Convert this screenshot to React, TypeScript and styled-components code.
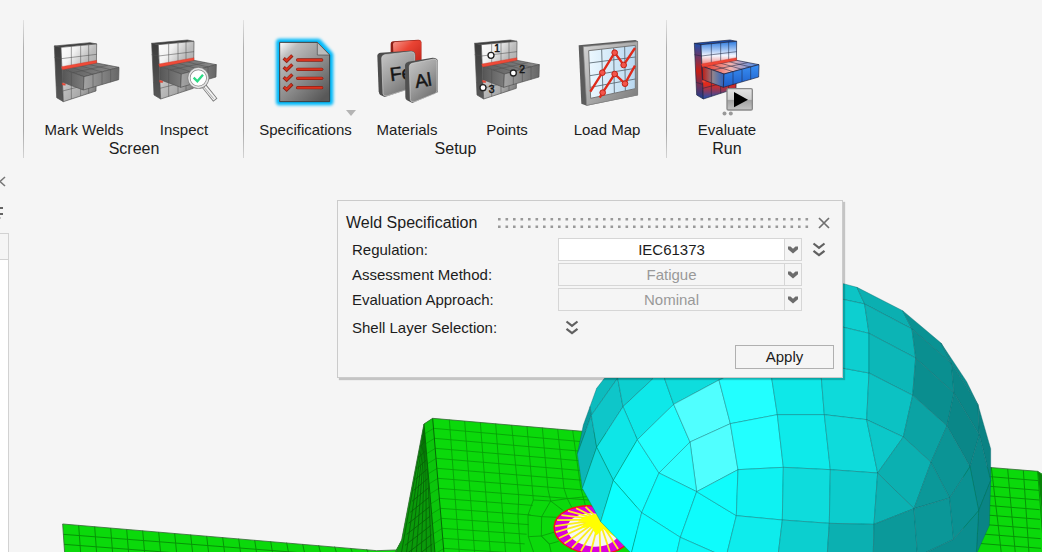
import React from "react";
import styled, { createGlobalStyle } from "styled-components";

const Global = createGlobalStyle`
  *, *::before, *::after { box-sizing: border-box; }
  body {
    margin: 0;
    background: #f5f5f5;
    color: #1c1c1c;
    font: 15px/18px "Liberation Sans", Arial, sans-serif;
  }
  button, select { font: inherit; color: inherit; }
`;

const Page = styled.div`
  min-height: 100vh;
  display: flex;
  flex-direction: column;
  overflow: hidden;
`;

/* ---------- ribbon ---------- */

const Ribbon = styled.header`
  display: flex;
  height: 160px;
  flex: none;
  padding: 20px 0 0 23px;
`;

const Group = styled.section`
  position: relative;
  display: flex;
  flex-direction: column;
  align-items: center;
  padding: 16px 9px 0 11px;
  &::before {
    content: "";
    position: absolute;
    left: 0;
    top: 0;
    width: 1px;
    height: 138px;
    background: linear-gradient(#e2e2e2, #b0b0b0 20%, #a8a8a8 80%, #d4d4d4);
  }
`;

const Tools = styled.div`
  display: flex;
`;

const Tool = styled.button<{ $wide?: boolean }>`
  position: relative;
  display: flex;
  flex-direction: column;
  align-items: center;
  gap: 13px;
  width: ${(p) => (p.$wide ? 103 : 100)}px;
  padding: 0;
  border: 0;
  background: none;
  white-space: nowrap;
`;

const ToolIcon = styled.svg`
  width: 72px;
  height: 72px;
  overflow: visible;
`;

const MenuMark = styled.svg`
  position: absolute;
  top: 74px;
  right: 1px;
  width: 10px;
  height: 6px;
`;

const MoreMark = styled.svg`
  position: absolute;
  top: 75px;
  left: 45px;
  width: 12px;
  height: 5px;
`;

const GroupTitle = styled.h2`
  margin: 0;
  font-size: 16px;
  font-weight: 400;
  line-height: 20px;
`;

const GREY = {
  side: ["#3c3c3c", "#585858"],
  face: ["#ffffff", "#a8a8a8", "#8a8a8a", "#b4b4b4"],
  top: ["#5a5a5a", "#747474", "#8a8a8a"],
  front: ["#a4a4a4", "#666666"],
  flank: ["#565656", "#7c7c7c"],
  line: "#505050",
  weld: "#ef4a38",
};
const HEAT = {
  side: ["#1d4fae", "#c81e14", "#1b3f92"],
  face: ["#2d7be0", "#f4f6ff", "#f03a28", "#e02a1c", "#1c50b4"],
  top: ["#e42a1c", "#f3b3ae", "#3c86ea"],
  front: ["#3a90f4", "#1c5cc8"],
  flank: ["#c01c14", "#8c8490", "#2a62c0"],
  line: "#1c2340",
  weld: "#f04636",
};

function Grad({ id, stops, vertical }: { id: string; stops: string[]; vertical?: boolean }) {
  return (
    <linearGradient id={id} x1="0" y1="0" x2={vertical ? 0 : 1} y2={vertical ? 1 : 0}>
      {stops.map((c, i) => (
        <stop key={i} offset={i / (stops.length - 1)} stopColor={c} />
      ))}
    </linearGradient>
  );
}

function Beam({ id, tone = GREY, heat }: { id: string; tone?: typeof GREY; heat?: boolean }) {
  const u = (n: string) => `url(#${id}-${n})`;
  return (
    <g stroke={tone.line} strokeWidth="2" strokeLinejoin="round">
      <defs>
        <Grad id={`${id}-side`} stops={tone.side} vertical />
        {heat ? (
          <Grad id={`${id}-face`} stops={tone.face} vertical />
        ) : (
          <linearGradient id={`${id}-face`} x1="0" y1="0" x2=".9" y2="1">
            <stop offset="0" stopColor="#fff" />
            <stop offset=".25" stopColor="#f2f2f2" />
            <stop offset=".5" stopColor="#bdbdbd" />
            <stop offset=".75" stopColor="#a8a8a8" />
            <stop offset="1" stopColor="#6c6c6c" />
          </linearGradient>
        )}
        <Grad id={`${id}-top`} stops={tone.top} />
        <Grad id={`${id}-front`} stops={tone.front} vertical={heat} />
        <Grad id={`${id}-flank`} stops={tone.flank} />
      </defs>
      <path d="M163 93L270 83L290 87L183 97Z" fill={tone.side[0]} />
      <path d="M163 93L183 97L190 260L170 248Z" fill={u("side")} />
      <path d="M183 97L290 87L288 228L190 260Z" fill={u("face")} />
      <path
        d="M163 127L184 131L290 118M168 210L188 216M188 228L250 212M214 94V252M242 92V243M266 89V235"
        fill="none"
        strokeWidth="1.6"
      />
      <path d="M187 162L290 144L357 157L252 185Z" fill={u("top")} />
      <path d="M187 162L252 185L250 225L188 202Z" fill={u("flank")} />
      <path d="M252 185L357 157L356 194L250 225Z" fill={u("front")} />
      <path
        d="M218 173L323 151M214 157L279 178V217M240 152L306 171V209M266 148L332 164V202M214 172V211"
        fill="none"
        strokeWidth="1.6"
      />
      <path d="M184 155L290 136V144L187 164Z" fill={tone.weld} stroke="#c23a2a" strokeWidth="1" />
      <path d="M186 204L196 206V211L187 210Z" fill={tone.weld} stroke="#c23a2a" strokeWidth="1" />
    </g>
  );
}

const MarkIcon = () => (
  <ToolIcon viewBox="144 63 216 216" aria-hidden="true">
    <Beam id="mark" />
  </ToolIcon>
);

const InspectIcon = () => (
  <ToolIcon viewBox="444 63 216 216" aria-hidden="true">
    <g transform="translate(292 -8)">
      <Beam id="inspect" />
    </g>
    <path d="M612 213L641 249" stroke="#777" strokeWidth="16" strokeLinecap="square" />
    <path d="M610 211L641 249" stroke="#f2f2f2" strokeWidth="11" strokeLinecap="square" />
    <path d="M612 216L641 251" stroke="#aaa" strokeWidth="3" />
    <circle cx="595" cy="189" r="28" fill="#fff" stroke="#808080" strokeWidth="9" />
    <circle cx="595" cy="189" r="28" fill="none" stroke="#e4e4e4" strokeWidth="5" />
    <path d="M581 188L592 199L609 179" fill="none" stroke="#2ddb86" strokeWidth="7" />
  </ToolIcon>
);

const SpecIcon = () => (
  <ToolIcon viewBox="88 63 216 216" aria-hidden="true">
    <defs>
      <linearGradient id="doc" x1="0" y1="0" x2=".8" y2="1">
        <stop offset="0" stopColor="#fff" />
        <stop offset=".2" stopColor="#bdbdbd" />
        <stop offset=".6" stopColor="#8c8c8c" />
        <stop offset="1" stopColor="#585858" />
      </linearGradient>
      <filter id="glow" x="-30%" y="-30%" width="160%" height="160%">
        <feGaussianBlur stdDeviation="5" />
      </filter>
    </defs>
    <path
      d="M117 82H232L267 120V260H117Z"
      fill="#06b9fa"
      stroke="#06b9fa"
      strokeWidth="22"
      strokeLinejoin="round"
      filter="url(#glow)"
    />
    <path d="M117 82H230L267 120V260H117Z" fill="url(#doc)" stroke="#3d3d3d" strokeWidth="3" />
    <path d="M230 82V120H267Z" fill="#bcbcbc" stroke="#4d4d4d" strokeWidth="2" />
    {[130, 157, 187, 216].map((y) => (
      <g key={y} fill="none">
        <path d={`M129 ${y}L138 ${y + 8}L155 ${y - 9}`} stroke="#8c2114" strokeWidth="10" />
        <path d={`M131 ${y + 1}L138 ${y + 7}L153 ${y - 8}`} stroke="#d8331f" strokeWidth="6" />
      </g>
    ))}
    {[135, 163, 190, 218].map((y) => (
      <g key={y} strokeLinecap="round">
        <path d={`M171 ${y}H243`} stroke="#8c2114" strokeWidth="10" />
        <path d={`M171 ${y}H243`} stroke="#d8331f" strokeWidth="6" />
      </g>
    ))}
  </ToolIcon>
);

const IconText = styled.text`
  font-family: "Liberation Sans", Arial, sans-serif;
  fill: #161616;
  stroke: #161616;
  stroke-width: 1.5px;
`;

const MaterialsIcon = () => (
  <ToolIcon viewBox="393 63 216 216" aria-hidden="true">
    <defs>
      <linearGradient id="tile" x1="0" y1="0" x2=".6" y2="1">
        <stop offset="0" stopColor="#c8c8c8" />
        <stop offset=".5" stopColor="#a2a2a2" />
        <stop offset="1" stopColor="#747474" />
      </linearGradient>
      <linearGradient id="redtile" x1="0" y1="0" x2="1" y2="1">
        <stop offset="0" stopColor="#f59a8e" />
        <stop offset=".4" stopColor="#ea4434" />
        <stop offset="1" stopColor="#b81e14" />
      </linearGradient>
    </defs>
    <path d="M452 86Q452 80 459 79L535 74Q544 74 544 82V150L460 160L452 150Z" fill="#8e1f16" />
    <path d="M459 88Q459 82 465 81L537 76Q544 77 544 84V150L462 158Z" fill="url(#redtile)" />
    <path d="M412 122Q413 114 422 113L510 107Q526 108 526 118V216L434 246L420 239Q417 236 416 229Z" fill="#4c4c4c" />
    <path
      d="M425 130Q425 121 434 119L514 110Q524 110 524 119V209Q524 216 516 219L440 243Q430 245 429 236Z"
      fill="url(#tile)"
      stroke="#d0d0d0"
      strokeWidth="2"
    />
    <IconText x="452" y="199" fontSize="58" transform="rotate(-7 452 199)">Fe</IconText>
    <path d="M495 150Q496 142 505 140L578 128Q593 129 593 137V232L517 264L501 256Q496 254 496 246Z" fill="#505050" />
    <path
      d="M508 155Q508 147 516 145L582 132Q591 132 591 140V226Q591 234 584 236L522 261Q512 263 511 254Z"
      fill="url(#tile)"
      stroke="#d6d6d6"
      strokeWidth="2"
    />
    <IconText x="528" y="219" fontSize="56" transform="rotate(-9 528 219)">Al</IconText>
  </ToolIcon>
);

const PointsIcon = () => (
  <ToolIcon viewBox="63 63 216 216" aria-hidden="true">
    <g transform="translate(-89 -8)">
      <Beam id="points" />
    </g>
    <g fill="#fff" stroke="#222" strokeWidth="4">
      <circle cx="123" cy="121" r="9" />
      <circle cx="190" cy="174" r="9" />
      <circle cx="99" cy="218" r="9" />
    </g>
    <IconText x="133" y="112" fontSize="31">1</IconText>
    <IconText x="208" y="173" fontSize="31">2</IconText>
    <IconText x="116" y="234" fontSize="31">3</IconText>
  </ToolIcon>
);

const LoadMapIcon = () => {
  const nodes = [[457, 173], [494, 113], [521, 150], [458, 233], [494, 177], [525, 206]];
  return (
    <ToolIcon viewBox="363 63 216 216" aria-hidden="true">
      <defs>
        <linearGradient id="frame" x1="0" y1="0" x2="1" y2="1">
          <stop offset="0" stopColor="#d6d6d6" />
          <stop offset=".5" stopColor="#aaa" />
          <stop offset="1" stopColor="#777" />
        </linearGradient>
        <Grad id="chart" stops={["#ecf8ff", "#b9d8f0"]} />
      </defs>
      <path d="M386 91L556 75L564 79V241L410 272L394 266Z" fill="#5c5c5c" />
      <path d="M400 95L563 80V240L410 271Z" fill="url(#frame)" stroke="#8b8b8b" strokeWidth="2" />
      <path d="M416 107L556 91V221L422 250Z" fill="url(#chart)" stroke="#777" strokeWidth="3" />
      <path
        d="M418 144L556 126M420 182L556 160M421 217L556 192M455 103L459 241M491 99L493 234M524 95L526 227"
        stroke="#56646e"
        strokeWidth="2.5"
        fill="none"
      />
      <path
        d="M421 230L457 173L494 113L521 150L555 99M449 248L458 233L494 177L525 206L555 152"
        stroke="#df2b1b"
        strokeWidth="7"
        fill="none"
      />
      {nodes.map(([x, y]) => (
        <circle key={`${x}-${y}`} cx={x} cy={y} r="8.5" fill="#f4554a" stroke="#bd2418" strokeWidth="3" />
      ))}
    </ToolIcon>
  );
};

const EvaluateIcon = () => (
  <ToolIcon viewBox="108 63 216 216" aria-hidden="true">
    <g transform="translate(-45 -8)">
      <Beam id="evaluate" tone={HEAT} heat />
    </g>
    <defs>
      <linearGradient id="play" x1="0" y1="0" x2="0" y2="1">
        <stop offset="0" stopColor="#e4e4e4" />
        <stop offset=".5" stopColor="#d0d0d0" />
        <stop offset=".55" stopColor="#a2a2a2" />
        <stop offset="1" stopColor="#c4c4c4" />
      </linearGradient>
    </defs>
    <rect x="216" y="221" width="76" height="64" rx="4" fill="url(#play)" stroke="#8a8a8a" strokeWidth="4" />
    <path d="M237 231L279 254L237 277Z" fill="#000" />
  </ToolIcon>
);

/* ---------- workspace ---------- */

const Workspace = styled.main`
  flex: 1;
  display: flex;
`;

const SidePanel = styled.aside`
  flex: none;
  width: 9px;
  display: flex;
  flex-direction: column;
  overflow: hidden;
`;

const PanelButton = styled.button`
  display: flex;
  width: 9px;
  height: 32px;
  flex: none;
  padding: 0;
  border: 0;
  background: none;
`;

const PanelHead = styled.div`
  height: 27px;
  margin-top: 9px;
  border: 1px solid #d2d2d2;
  border-left: 0;
`;

const PanelBody = styled.div`
  flex: 1;
  background: #fff;
  border-right: 1px solid #d2d2d2;
`;

const Viewport = styled.div`
  position: relative;
  flex: 1;
  min-width: 0;
  height: calc(100vh - 160px);
`;

const Scene = styled.svg`
  display: block;
  width: 100%;
  height: 100%;
`;

const SPHERE: [string, string][] = [
  ["#0cbcbe", "104,324 80,355 60,410 64,436 143,324"],
  ["#0a9c9e", "60,410 40,465 22,552 64,436"],
  ["#0cb6b8", "64,436 80,532 37,655 22,552"],
  ["#0ec6c9", "143,324 159,410 80,532 64,436"],
  ["#0ccfd0", "143,324 251,324 159,410"],
  ["#0ee8e9", "251,324 283,324 311,403 202,509 159,410"],
  ["#0ee6e7", "80,532 159,410 202,509 130,631"],
  ["#0edadb", "80,532 130,631 92,755 37,655"],
  ["#14ffff", "130,631 202,509 267,609 215,728"],
  ["#22ffff", "202,509 311,403 360,516 267,609"],
  ["#0edddd", "283,324 462,324 447,330 311,403"],
  ["#50ffff", "311,403 447,330 481,461 360,516"],
  ["#50ffff", "360,516 481,461 504,599 380,665"],
  ["#2cffff", "267,609 360,516 380,665"],
  ["#22ffff", "447,330 462,324 605,324 622,434 481,461"],
  ["#22ffff", "481,461 622,434 640,592 504,599"],
  ["#0cffff", "130,631 215,728 184,850 92,755"],
  ["#0cffff", "215,728 267,609 380,665 331,802"],
  ["#0cffff", "215,728 331,802 320,850 184,850"],
  ["#0efcfc", "331,802 380,665 499,737 471,850 440,850"],
  ["#0ef6f6", "331,802 440,850 320,850"],
  ["#10fcfc", "380,665 504,599 499,737"],
  ["#0ef2f2", "504,599 640,592 637,750 499,737"],
  ["#0eecec", "499,737 637,750 625,850 471,850"],
  ["#0ee8e8", "605,324 754,324 763,434 622,434"],
  ["#0eeaea", "622,434 763,434 781,599 640,592"],
  ["#0edcdc", "640,592 781,599 778,760 637,750"],
  ["#0ccfcf", "637,750 778,760 772,850 625,850"],
  ["#0edada", "754,324 754,285 820,295 897,309 890,449 763,434"],
  ["#0edbdb", "763,434 890,449 923,609 781,599"],
  ["#0ccccd", "781,599 923,609 912,763 778,760"],
  ["#0bb0b1", "778,760 912,763 910,850 772,850"],
  ["#0cc4c5", "800,38 820,41 861,52 884,102 800,84"],
  ["#0dcfd0", "800,84 884,102 897,190 800,167"],
  ["#0dcfd0", "800,167 897,190 897,309 800,291"],
  ["#0bafb1", "861,52 998,122 1026,177 884,102"],
  ["#0cb4b5", "884,102 1026,177 1037,264 897,190"],
  ["#0cb7b8", "897,190 1037,264 1028,376 897,309"],
  ["#0cc2c3", "897,309 1028,376 1000,501 890,449"],
  ["#0cc8c9", "890,449 1000,501 923,609"],
  ["#0a9293", "998,122 1113,219 1144,280 1026,177"],
  ["#0a8f90", "1026,177 1144,280 1152,369 1037,264"],
  ["#0a8e8f", "1037,264 1152,369 1131,468 1028,376"],
  ["#0ba3a4", "1028,376 1131,468 1083,577 1000,501"],
  ["#0bb0b1", "1000,501 1083,577 1032,716 923,609"],
  ["#0a8b8c", "1113,219 1190,335 1224,404 1144,280"],
  ["#0a8687", "1144,280 1224,404 1228,494 1152,369"],
  ["#0a8788", "1152,369 1228,494 1200,590 1131,468"],
  ["#0b9495", "1131,468 1200,590 1139,684 1083,577"],
  ["#0b9899", "1083,577 1139,684 1032,716"],
  ["#0bb2b3", "923,609 1032,716 912,763"],
  ["#0b999a", "912,763 1032,716 1042,850 910,850"],
  ["#0b9798", "1032,716 1139,684 1151,808 1062,850 1042,850"],
  ["#0a8283", "1224,404 1262,536 1262,632 1228,494"],
  ["#0a8889", "1228,494 1262,632 1226,722 1200,590"],
  ["#0a9192", "1200,590 1226,722 1151,808 1139,684"],
  ["#0a8485", "1262,632 1258,766 1220,850 1219,850 1226,722"],
  ["#0a8e8f", "1226,722 1219,850 1062,850 1151,808"],
];

const range = (n: number) => Array.from({ length: n }, (_, i) => i);

function Plate() {
  const rows = range(14).map((i) => {
    const y = 85 + i * 30;
    const left = 131 + i * 2.6;
    const end = i < 7 ? 620 : i < 12 ? 428 - (i - 7) * 6 : 480;
    return `M${left - 26} ${y + 16}L${left} ${y}L${end} ${y + (end - left) * (0.09 - i * 0.002)}`;
  });
  const cols = [178, 224, 271, 317, 365, 411, 457, 503, 548].map((x, i) => {
    const y = 59 + i * 4;
    if (i < 4) return `M${x} ${y}L${x + 30} 460`;
    if (i === 4) return `M${x} ${y}L386 290L384 350L392 460`;
    if (i === 5) return `M${x} ${y}L430 300L414 345L415 410L432 460`;
    if (i === 6) return `M${x} ${y}L474 268L482 303L455 350L454 408L478 432L484 460`;
    if (i === 7) return `M${x} ${y}L522 266L532 296L545 322`;
    return `M${x} ${y}L572 262L586 316`;
  });
  return (
    <g transform="translate(390 400) scale(.33333)">
      <path d="M102 72L128 55L740 108V460H15L18 450L35 420Z" fill="#0bd90b" />
      <path d="M102 72L35 420L18 450L14 460H136L125 280Z" fill="#0a9a0a" />
      <g fill="none" stroke="#064f06" strokeWidth="2.5" opacity=".75">
        {range(7).map((i) => (
          <path key={i} d={`M${102 + i} ${78 + i * 4}L${34 + i * 15} 460`} />
        ))}
        {range(14).map((i) => {
          const y = 96 + i * 28;
          return <path key={i} d={`M${103 + i * 2} ${y}L${97 - i * 5.2} ${y + 10 + i * 5}`} />;
        })}
      </g>
      <path d="M102 72L128 55L162 460H135Z" fill="#0bc60b" />
      <g fill="none" stroke="#079d07" strokeWidth="2.5">
        <path d={rows.join("")} />
        <path d={cols.join("")} />
        <path d="M430 300L482 303L532 296L590 290M482 303L520 332M414 345L455 350L500 352M415 410L454 408L494 396M454 408L478 432L506 424" />
      </g>
      <path d="M102 72L135 460M128 55L162 460" fill="none" stroke="#066806" strokeWidth="3" />
      <path d="M15 460L35 420L102 72L128 55L740 108" fill="none" stroke="#3b6b3b" strokeWidth="2.5" />
    </g>
  );
}

function Flange() {
  return (
    <g transform="translate(50 500) scale(.33333)">
      <path d="M38 72L980 152L1038 150L1050 160H44Z" fill="#0bd90b" />
      <path
        d={
          "M40 103L800 162M42 133L420 162" +
          range(19).map((i) => `M${86 + i * 48} ${76 + i * 4}L${92 + i * 48} 160`).join("")
        }
        fill="none"
        stroke="#079307"
        strokeWidth="3"
      />
      <path d="M44 160L38 72L980 152L1038 150" fill="none" stroke="#3b6b3b" strokeWidth="2.5" />
    </g>
  );
}

function RightPlate() {
  return (
    <g>
      <path d="M1180 586L1403 604L1424 614V850H1180Z" fill="#0bd90b" />
      <path d="M1403 604L1418 616V850L1414 710Z" fill="#088408" />
      <path
        d={
          range(9).map((i) => `M1200 ${615 + i * 29}L${1406 + i} ${632 + i * 29}`).join("") +
          "M1264 592L1284 760L1294 850M1313 597L1336 850M1360 601L1377 850M1403 604L1422 850"
        }
        fill="none"
        stroke="#079307"
        strokeWidth="3"
      />
      <path d="M1180 586L1403 604L1420 616" fill="none" stroke="#3b6b3b" strokeWidth="2.5" />
    </g>
  );
}

function Weld() {
  const spokes = range(24).map((i) => {
    const a = (i / 24) * Math.PI * 2;
    return `M598 519L${(593 + Math.cos(a) * 38).toFixed(1)} ${(530 + Math.sin(a) * 23).toFixed(1)}`;
  });
  return (
    <g transform="rotate(6 593 530)">
      <ellipse cx="593" cy="530" rx="39" ry="24" fill="#d900d9" stroke="#f01414" strokeWidth="1.4" />
      <ellipse cx="593" cy="530" rx="26" ry="16.5" fill="#f5f5f5" />
      <path d={spokes.join("")} stroke="#fbee1c" strokeWidth="1.8" fill="none" />
      <path d="M582 518L600 512L622 538L603 528L597 535L591 527L579 530L586 523L577 523Z" fill="#ffff00" />
    </g>
  );
}

function Model() {
  return (
    <Scene viewBox="9 160 1033 392" preserveAspectRatio="xMidYMin slice" role="img" aria-label="Finite element model">
      <Flange />
      <Plate />
      <Weld />
      <g transform="translate(570 270) scale(.33333)">
        <RightPlate />
        <g stroke="#046466" strokeOpacity=".45" strokeWidth="2.5" strokeLinejoin="round">
          {SPHERE.map(([fill, points], i) => (
            <polygon key={i} fill={fill} points={points} />
          ))}
        </g>
      </g>
    </Scene>
  );
}

/* ---------- dialog ---------- */

const Dialog = styled.form`
  position: absolute;
  left: 328px;
  top: 40px;
  width: 506px;
  padding: 12px 8px 8px;
  background: #f5f5f5;
  border: 1px solid #cbcbcb;
  box-shadow: 2px 2px 1px rgba(0, 0, 0, 0.2);
`;

const DialogBar = styled.div`
  display: flex;
  align-items: center;
  height: 20px;
  margin-bottom: 5px;
`;

const DialogTitle = styled.h1`
  margin: 0;
  width: 151px;
  font-size: 16px;
  font-weight: 400;
  line-height: 20px;
`;

const Grip = styled.svg`
  flex: 1;
  height: 12px;
`;

const IconButton = styled.button`
  display: flex;
  align-items: center;
  justify-content: center;
  width: 20px;
  height: 20px;
  flex: none;
  padding: 0;
  border: 0;
  background: none;
`;

const CloseButton = styled(IconButton)`
  margin-left: 4px;
`;

const Fields = styled.div`
  display: grid;
  grid-template-columns: 206px 244px 27px;
  row-gap: 2px;
  padding-left: 6px;
  align-items: center;
`;

const FieldLabel = styled.label`
  line-height: 23px;
`;

const SelectBox = styled.span`
  position: relative;
  display: block;
  height: 23px;
`;

const Select = styled.select`
  appearance: none;
  display: block;
  width: 100%;
  height: 23px;
  padding: 0 17px 0 0;
  border: 1px solid #d6d6d6;
  border-radius: 0;
  background: linear-gradient(90deg, transparent calc(100% - 17px), #d6d6d6 0, #d6d6d6 calc(100% - 16px), #f5f5f5 0) #fff;
  text-align: center;
  text-align-last: center;
  &:disabled {
    background-color: #f5f5f5;
    color: #999;
    opacity: 1;
  }
`;

const SelectArrow = styled.svg`
  position: absolute;
  right: 3px;
  top: 8px;
  width: 12px;
  height: 8px;
  pointer-events: none;
`;

const ExpandButton = styled(IconButton)`
  margin-left: 7px;
`;

const LayerRow = styled.div`
  display: grid;
  grid-template-columns: 206px 28px;
  align-items: center;
  height: 24px;
  margin-top: 5px;
  padding-left: 6px;
`;

const LayerButton = styled(IconButton)`
  width: 28px;
`;

const Actions = styled.div`
  display: flex;
  justify-content: flex-end;
  margin-top: 5px;
`;

const ApplyButton = styled.button`
  width: 99px;
  height: 24px;
  padding: 0;
  border: 1px solid #b0b0b0;
  background: #f5f5f5;
`;

function DoubleChevron() {
  return (
    <svg width="14" height="16" viewBox="0 0 14 16" aria-hidden="true">
      <path d="M1.5 1.5L7 5.8L12.5 1.5M1.5 8.8L7 13.2L12.5 8.8" fill="none" stroke="#606060" strokeWidth="2.2" />
    </svg>
  );
}

function Field({ id, label, value, disabled }: { id: string; label: string; value: string; disabled?: boolean }) {
  return (
    <>
      <FieldLabel htmlFor={id}>{label}</FieldLabel>
      <SelectBox>
        <Select id={id} disabled={disabled} defaultValue={value}>
          <option>{value}</option>
        </Select>
        <SelectArrow viewBox="0 0 12 8" aria-hidden="true">
          <path d="M1 .5H3.500L6 2.800L8.500 .5H11V3.200L6 7.600L1 3.200Z" fill="#6c6c6c" />
        </SelectArrow>
      </SelectBox>
    </>
  );
}

export default function App() {
  return (
    <Page>
      <Global />
      <Ribbon>
        <Group>
          <Tools>
            <Tool type="button"><MarkIcon />Mark Welds</Tool>
            <Tool type="button"><InspectIcon />Inspect</Tool>
          </Tools>
          <GroupTitle>Screen</GroupTitle>
        </Group>
        <Group>
          <Tools>
            <Tool type="button" $wide>
              <SpecIcon />
              Specifications
              <MenuMark viewBox="0 0 10 6" aria-hidden="true"><path d="M0 0H10L5 6Z" fill="#b4b4b4" /></MenuMark>
            </Tool>
            <Tool type="button"><MaterialsIcon />Materials</Tool>
            <Tool type="button"><PointsIcon />Points</Tool>
            <Tool type="button"><LoadMapIcon />Load Map</Tool>
          </Tools>
          <GroupTitle>Setup</GroupTitle>
        </Group>
        <Group>
          <Tools>
            <Tool type="button">
              <EvaluateIcon />
              Evaluate
              <MoreMark viewBox="0 0 12 5" aria-hidden="true">
                <circle cx="2.5" cy="2.5" r="2" fill="#999" />
                <circle cx="8.8" cy="2.5" r="2" fill="#999" />
              </MoreMark>
            </Tool>
          </Tools>
          <GroupTitle>Run</GroupTitle>
        </Group>
      </Ribbon>
      <Workspace>
        <SidePanel>
          <PanelButton type="button" aria-label="Close panel">
            <svg width="9" height="32" viewBox="0 0 9 32">
              <path d="M5 17L0 21.5L5 26" fill="none" stroke="#777" strokeWidth="1.6" />
            </svg>
          </PanelButton>
          <PanelButton type="button" aria-label="List options">
            <svg width="9" height="32" viewBox="0 0 9 32">
              <path d="M0 16H3M0 22H3" stroke="#333" strokeWidth="1.4" />
              <path d="M0 26H1" stroke="#999" />
            </svg>
          </PanelButton>
          <PanelHead />
          <PanelBody />
        </SidePanel>
        <Viewport>
          <Model />
          <Dialog onSubmit={(e: React.FormEvent) => e.preventDefault()}>
            <DialogBar>
              <DialogTitle>Weld Specification</DialogTitle>
              <Grip aria-hidden="true">
                {range(42).map((i) => (
                  <path
                    key={i}
                    d={`M${1 + i * 7.5} 1h2.6v2.6h-2.6ZM${1 + i * 7.5} 8.5h2.6v2.6h-2.6Z`}
                    fill="#999"
                  />
                ))}
              </Grip>
              <CloseButton type="button" aria-label="Close">
                <svg width="12" height="12" viewBox="0 0 12 12">
                  <path d="M1 1L11 11M11 1L1 11" stroke="#707070" strokeWidth="1.7" />
                </svg>
              </CloseButton>
            </DialogBar>
            <Fields>
              <Field id="regulation" label="Regulation:" value="IEC61373" />
              <ExpandButton type="button" aria-label="Regulation details"><DoubleChevron /></ExpandButton>
              <Field id="method" label="Assessment Method:" value="Fatigue" disabled />
              <span />
              <Field id="approach" label="Evaluation Approach:" value="Nominal" disabled />
              <span />
            </Fields>
            <LayerRow>
              <span id="layer">Shell Layer Selection:</span>
              <LayerButton type="button" aria-labelledby="layer"><DoubleChevron /></LayerButton>
            </LayerRow>
            <Actions>
              <ApplyButton type="submit">Apply</ApplyButton>
            </Actions>
          </Dialog>
        </Viewport>
      </Workspace>
    </Page>
  );
}
